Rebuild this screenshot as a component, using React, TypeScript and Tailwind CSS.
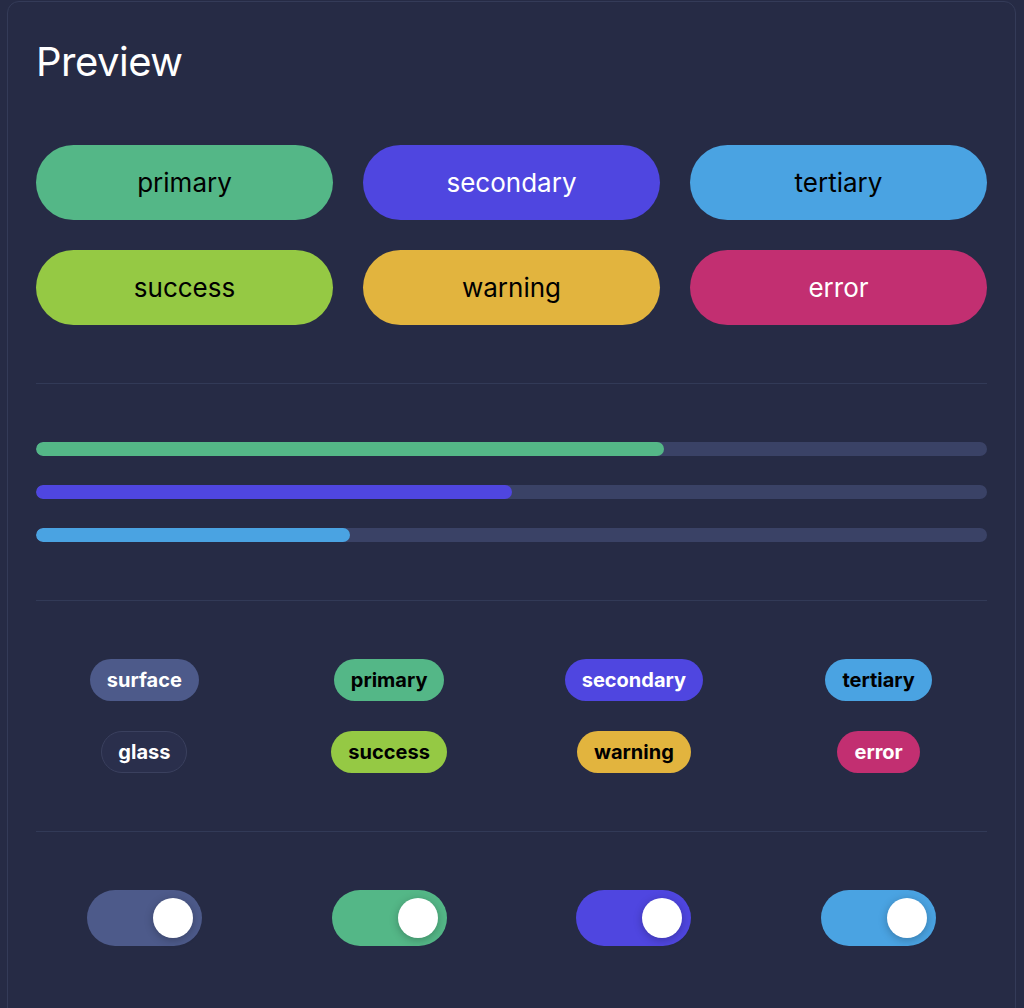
import type React from "react"

const buttons = [
  { label: "primary", bg: "bg-[#54b787]", fg: "text-black" },
  { label: "secondary", bg: "bg-[#4f46e0]", fg: "text-white" },
  { label: "tertiary", bg: "bg-[#4aa3e2]", fg: "text-black" },
  { label: "success", bg: "bg-[#95c944]", fg: "text-black" },
  { label: "warning", bg: "bg-[#e2b43e]", fg: "text-black" },
  { label: "error", bg: "bg-[#c22f71]", fg: "text-white" },
]

const bars = [
  { color: "bg-[#54b787]", value: 66 },
  { color: "bg-[#4f46e0]", value: 50 },
  { color: "bg-[#4aa3e2]", value: 33 },
]

const badges = [
  { label: "surface", cls: "bg-[#4d5a8a] text-white border-transparent" },
  { label: "primary", cls: "bg-[#54b787] text-black border-transparent" },
  { label: "secondary", cls: "bg-[#4f46e0] text-white border-transparent" },
  { label: "tertiary", cls: "bg-[#4aa3e2] text-black border-transparent" },
  { label: "glass", cls: "bg-[#2a2f4c] text-white border-[#3a405e]" },
  { label: "success", cls: "bg-[#95c944] text-black border-transparent" },
  { label: "warning", cls: "bg-[#e2b43e] text-black border-transparent" },
  { label: "error", cls: "bg-[#c22f71] text-white border-transparent" },
]

const toggles = ["bg-[#4d5a8a]", "bg-[#54b787]", "bg-[#4f46e0]", "bg-[#4aa3e2]"]

const Divider: React.FC = () => <div className="h-px bg-[#323a57] my-[58px]" />

const App: React.FC = () => {
  return (
    <div className="min-h-screen bg-[#262b45] pt-px pl-[7px] font-['Inter','Liberation_Sans',sans-serif] overflow-hidden">
      <div className="w-[1009px] min-h-[1020px] border border-[#343b58] rounded-xl px-7 pt-7 pb-10">
        <h1 className="text-[40px] leading-[48px] text-white font-normal tracking-[-0.5px] mt-2 mb-[59px]">Preview</h1>

        <div className="grid grid-cols-3 gap-[30px]">
          {buttons.map((b) => (
            <button
              key={b.label}
              type="button"
              className={`h-[75px] rounded-full text-[26px] flex items-center justify-center ${b.bg} ${b.fg}`}
            >
              {b.label}
            </button>
          ))}
        </div>

        <Divider />

        <div className="flex flex-col gap-[29px]">
          {bars.map((bar, i) => (
            <div key={i} className="h-[14px] rounded-full bg-[#3a4266] overflow-hidden">
              <div className={`h-full rounded-full ${bar.color}`} style={{ width: `${bar.value}%` }} />
            </div>
          ))}
        </div>

        <Divider />

        <div className="grid grid-cols-4 gap-x-7 gap-y-[30px]">
          {badges.map((b) => (
            <div key={b.label} className="flex justify-center">
              <span
                className={`inline-flex items-center h-[42px] px-4 rounded-full border text-[20px] font-bold ${b.cls}`}
              >
                {b.label}
              </span>
            </div>
          ))}
        </div>

        <Divider />

        <div className="grid grid-cols-4 gap-x-7">
          {toggles.map((t, i) => (
            <div key={i} className="flex justify-center">
              <div className={`w-[115px] h-[56px] rounded-full flex items-center justify-end pr-[9px] ${t}`}>
                <div className="w-10 h-10 rounded-full bg-white shadow-[0_2px_8px_rgba(0,0,0,0.25)]" />
              </div>
            </div>
          ))}
        </div>
      </div>
    </div>
  )
}

export default App
